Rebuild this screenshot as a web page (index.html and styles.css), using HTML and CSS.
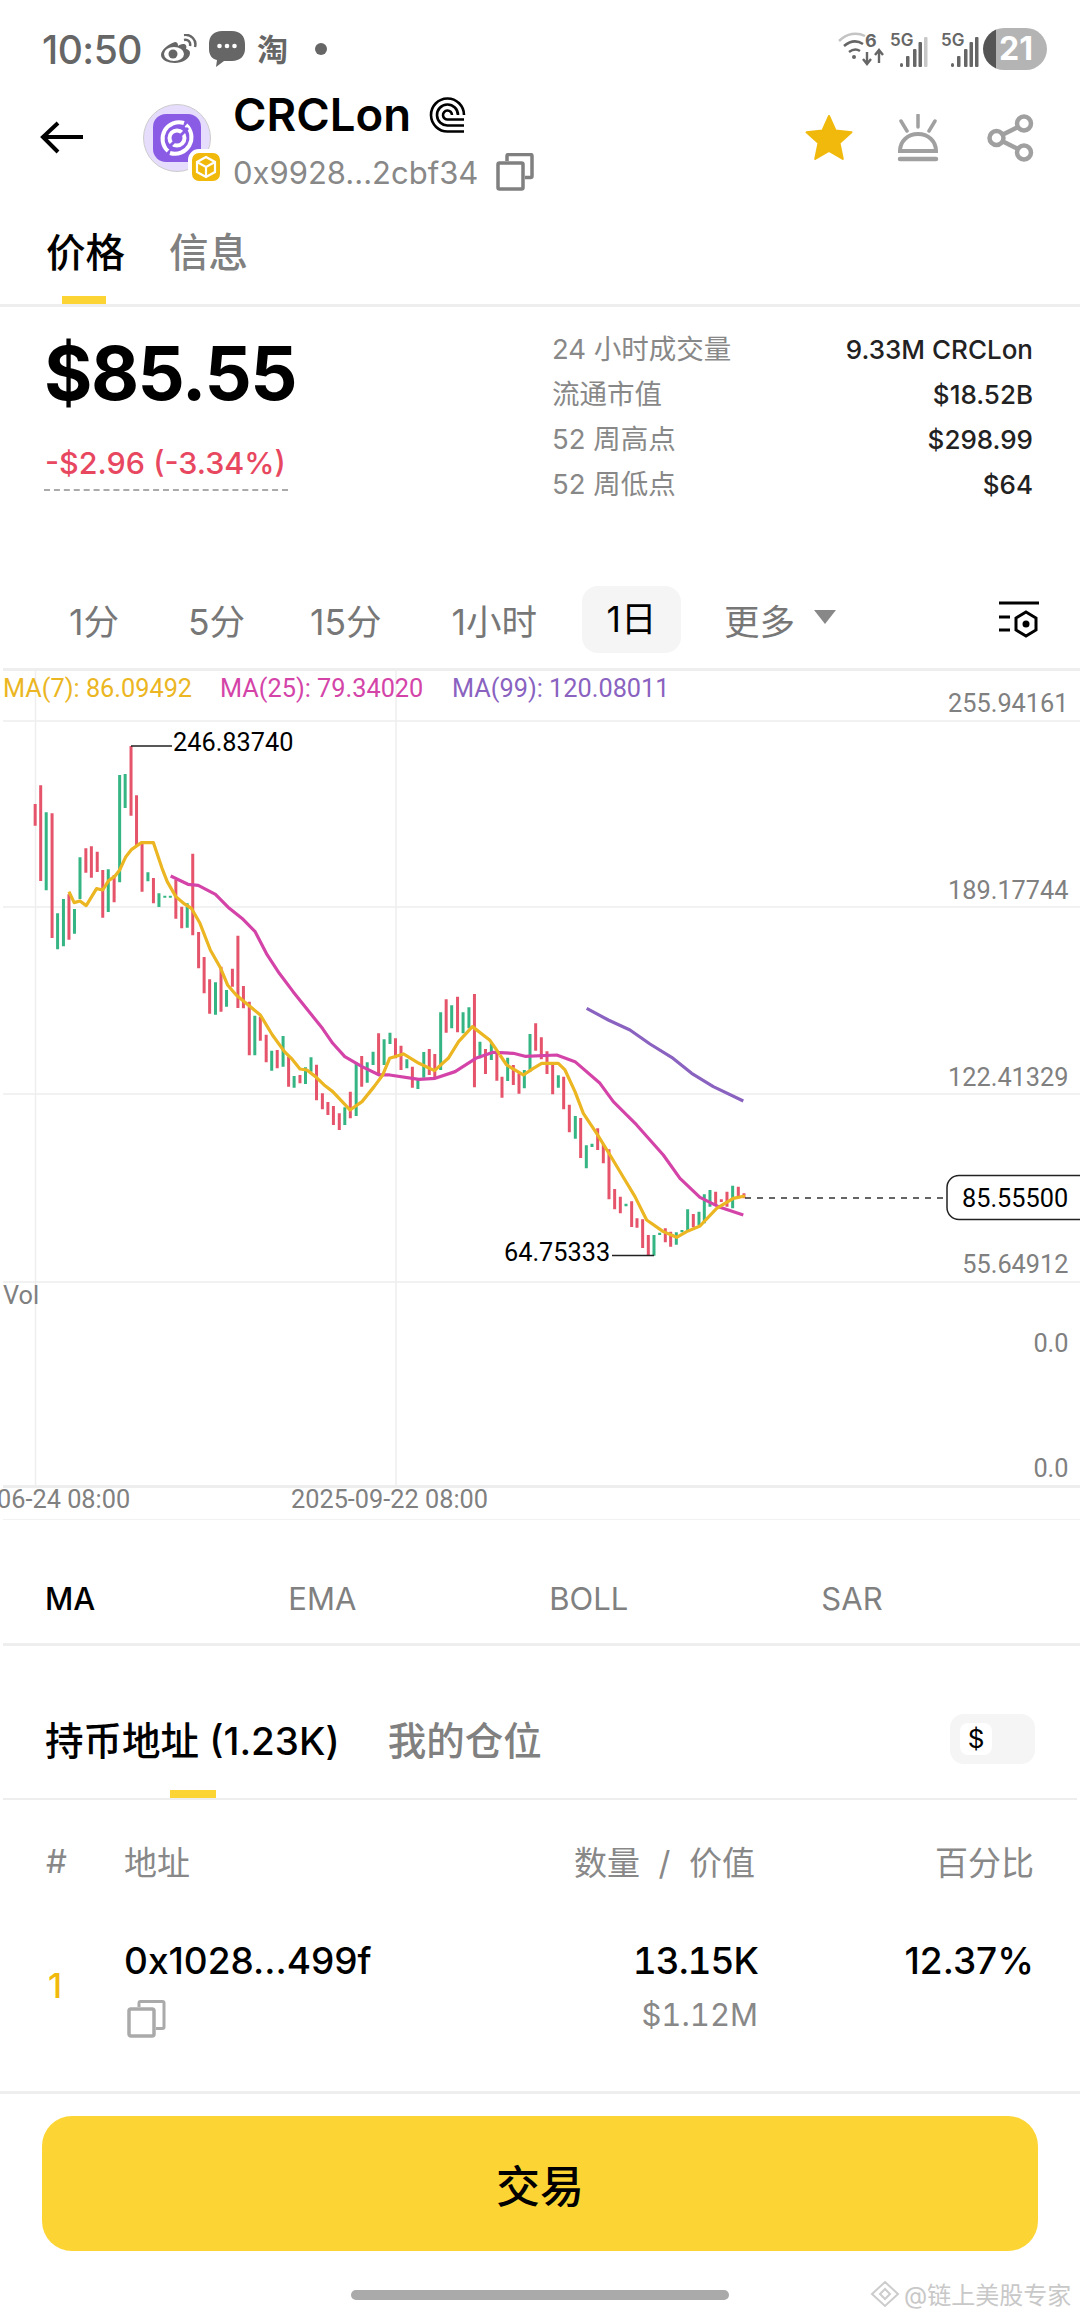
FILE: index.html
```html
<!DOCTYPE html>
<html lang="zh-CN">
<head>
    <meta charset="UTF-8">
    <meta name="viewport" content="width=device-width, initial-scale=1.0">
    <title>CRCLon</title>
    <link rel="stylesheet" href="styles.css">
</head>
<body>
<div class="page">
    <div class="status-bar">
        <span class="status-time">10:50</span>
        <svg class="ic-weibo" width="38" height="30" viewBox="0 0 38 30">
            <path d="M15 8C8 10 1 16 1 21c0 5 7 8 14 8s15-4 15-10c0-3-3-4-4-4 1-3 0-5-3-5-2 0-4 1-5 2 0-3-1-4-3-4z" fill="#666"/>
            <ellipse cx="14" cy="20" rx="10" ry="7" fill="#fff"/>
            <circle cx="13" cy="20" r="4.5" fill="#666"/>
            <path d="M24 6c4-1 7 2 6 6M24 1c7-1 13 5 11 12" fill="none" stroke="#666" stroke-width="2.5"/>
        </svg>
        <svg class="ic-chat" width="36" height="36" viewBox="0 0 36 36">
            <path d="M13 0h10c8 0 13 5 13 13v5c0 7-5 12-13 12H15l-8 6 1-7C3 28 0 24 0 18v-5C0 5 5 0 13 0z" fill="#666"/>
            <circle cx="10.500" cy="15" r="2.300" fill="#fff"/>
            <circle cx="18" cy="15" r="2.300" fill="#fff"/>
            <circle cx="25.500" cy="15" r="2.300" fill="#fff"/>
        </svg>
        <span class="status-tao">淘</span>
        <span class="status-dot"></span>
        <div class="status-right">
            <svg class="ic-wifi" width="46" height="36" viewBox="0 0 46 36">
                <path d="M1 10C9 2 19 1 27 5" fill="none" stroke="#c4c4c4" stroke-width="2.500"/>
                <path d="M6 15c6-5 13-6 19-2M11 21c4-3 8-3 11-1" fill="none" stroke="#666" stroke-width="2.500"/>
                <circle cx="16" cy="26" r="2" fill="#666"/>
                <text class="status-six" x="27" y="16">6</text>
                <path d="M29 21v12M25 28l4 5 4-5M41 32V19M37 24l4-5 4 5" fill="none" stroke="#666" stroke-width="2.400"/>
            </svg>
            <svg class="ic-signal" width="38" height="46" viewBox="0 -6 38 46">
                <text class="status-5g" x="0" y="14">5G</text>
                <rect x="10" y="31" width="3" height="4" rx="1.500" fill="#666"/>
                <rect x="16" y="24" width="3.500" height="11" rx="1" fill="#666"/>
                <rect x="23" y="17" width="3.500" height="18" rx="1" fill="#666"/>
                <rect x="34" y="5" width="3.500" height="30" rx="1" fill="#c8c8c8"/>
                <rect x="28.500" y="10" width="3.500" height="25" rx="1" fill="#666"/>
            </svg>
            <svg class="ic-signal-2" width="38" height="46" viewBox="0 -6 38 46">
                <text class="status-5g" x="0" y="14">5G</text>
                <rect x="10" y="31" width="3" height="4" rx="1.500" fill="#666"/>
                <rect x="16" y="24" width="3.500" height="11" rx="1" fill="#666"/>
                <rect x="23" y="17" width="3.500" height="18" rx="1" fill="#666"/>
                <rect x="28.500" y="10" width="3.500" height="25" rx="1" fill="#666"/>
                <rect x="34" y="5" width="3.500" height="30" rx="1" fill="#666"/>
            </svg>
            <div class="battery">21</div>
        </div>
    </div>

    <div class="top-nav">
        <svg class="ic-back" width="44" height="34" viewBox="0 0 44 34">
            <path d="M43 16H3M18 2L3 16l15 15" fill="none" stroke="#000" stroke-width="4"/>
        </svg>
        <div class="token-logo">
            <svg width="80" height="80" viewBox="0 0 80 80">
                <circle cx="34" cy="34" r="33.500" fill="#e6dcfb" stroke="#ccc" stroke-width="1"/>
                <rect x="10" y="10" width="48" height="48" rx="13" fill="#8a5ce6"/>
                <path d="M25 47A16.500 16.500 0 0 1 41 19M43 21A16.500 16.500 0 0 1 27 49" fill="none" stroke="#fff" stroke-width="4"/>
                <circle cx="34" cy="34" r="7.500" fill="none" stroke="#fff" stroke-width="4"/>
                <path d="M25 44L45 24" stroke="#8a5ce6" stroke-width="3"/>
                <rect x="47" y="47" width="32" height="32" rx="9" fill="#f0b90b" stroke="#fff" stroke-width="4"/>
                <path d="M63 53l9 5v10l-9 5-9-5V58zM54 58l9 5 9-5M63 63v10" fill="none" stroke="#fff" stroke-width="2.200"/>
            </svg>
        </div>
        <div class="token-info">
            <div class="token-title">
                <span>CRCLon</span>
                <svg width="38" height="38" viewBox="0 0 38 38">
                    <path d="M35 19A16.500 16.500 0 1 0 19 35.500H35M29 19A10.500 10.500 0 1 0 19 29.500H35M23 19A4.500 4.500 0 1 0 19 23.500H35" fill="none" stroke="#000" stroke-width="2.600"/>
                </svg>
            </div>
            <div class="token-address">
                <span>0x9928...2cbf34</span>
                <svg width="38" height="38" viewBox="0 0 38 38">
                    <path d="M11 8V3c0-1 .5-1.500 1.500-1.500h22c1 0 1.500 .5 1.500 1.500v20c0 1-.5 1.500-1.500 1.500H29" fill="none" stroke="#808080" stroke-width="3.500"/>
                    <rect x="2" y="10" width="25" height="26" rx="1.500" fill="none" stroke="#808080" stroke-width="3.500"/>
                </svg>
            </div>
        </div>
        <div class="nav-actions">
            <svg width="50" height="48" viewBox="0 0 50 48">
                <path d="M25 2l6.500 14.500 16 1.800-12 10.700 3.300 16-13.800-8-13.800 8 3.300-16-12-10.700 16-1.800z" fill="#f0b90b" stroke="#f0b90b" stroke-width="2" stroke-linejoin="round"/>
            </svg>
            <svg width="42" height="48" viewBox="0 0 42 48">
                <path d="M21 1v12M4 7l6 10M38 7l-6 10" fill="none" stroke="#a0a0a0" stroke-width="3.500" stroke-linecap="round"/>
                <path d="M3 37c0-10 8-17 18-17s18 7 18 17z" fill="none" stroke="#a0a0a0" stroke-width="4"/>
                <path d="M3 45h36" stroke="#a0a0a0" stroke-width="4.500" stroke-linecap="round"/>
            </svg>
            <svg class="ic-share" width="48" height="48" viewBox="0 0 48 48">
                <circle cx="37" cy="9.500" r="7" fill="none" stroke="#a0a0a0" stroke-width="4.500"/>
                <circle cx="37" cy="38.500" r="7" fill="none" stroke="#a0a0a0" stroke-width="4.500"/>
                <circle cx="9.500" cy="24" r="7" fill="none" stroke="#a0a0a0" stroke-width="4.500"/>
                <path d="M16 20.500L31 13M16 27.500L31 35" stroke="#a0a0a0" stroke-width="4.500"/>
            </svg>
        </div>
    </div>

    <div class="main-tabs">
        <span class="tab tab-active">价格</span>
        <span class="tab">信息</span>
    </div>

    <div class="summary">
        <div class="summary-price">
            <div class="price">$85.55</div>
            <div class="price-change">-$2.96 (-3.34%)</div>
        </div>
        <div class="summary-stats">
            <div class="stat-row"><span class="stat-label">24 小时成交量</span><span class="stat-value">9.33M CRCLon</span></div>
            <div class="stat-row"><span class="stat-label">流通市值</span><span class="stat-value">$18.52B</span></div>
            <div class="stat-row"><span class="stat-label">52 周高点</span><span class="stat-value">$298.99</span></div>
            <div class="stat-row"><span class="stat-label">52 周低点</span><span class="stat-value">$64</span></div>
        </div>
    </div>

    <div class="intervals">
        <span class="interval w-1m">1分</span>
        <span class="interval w-5m">5分</span>
        <span class="interval w-15m">15分</span>
        <span class="interval w-1h">1小时</span>
        <span class="interval interval-active">1日</span>
        <span class="interval interval-more">更多<i class="caret"></i></span>
        <svg class="ic-settings" width="42" height="38" viewBox="0 0 42 38">
            <path d="M1 2h40M1 16h11M1 29h11" fill="none" stroke="#000" stroke-width="3"/>
            <path d="M28 11l10 6v12l-10 6-10-6V17z" fill="none" stroke="#000" stroke-width="3"/>
            <circle cx="28" cy="23" r="3.500" fill="#000"/>
        </svg>
    </div>

    <svg class="chart" width="1080" height="852" viewBox="0 668 1080 852">
        <!-- grid -->
        <path class="grid" d="M3 721H1080M3 907H1080M3 1094H1080M3 1282H1080M35.500 671V1485M396 671V1485"/>
        <path class="grid-bold" d="M3 669.500H1080M3 1486.500H1080"/>
        <path class="grid" d="M3 1520H1080"/>

        <g transform="translate(0 700) scale(.3448 .3333)">
            <path class="candle-red" d="M102 312V377M118 256V543M151 340V714M200 583V719M249 445V518M265 439V533M282 455V516M298 510V653M331 525V607M380 138V347M396 286V438M412 430V575M445 534V610M510 540V656M527 620V685M559 461V706M576 696V805M592 771V880M608 838V941M641 800V935M674 806V860M690 707V924M706 858V925M723 905V1066M755 950V1022M772 1004V1087M804 1050V1105M837 1070V1160M870 1125V1150M918 1094V1201M935 1180V1228M951 1206V1245M967 1218V1275M984 1240V1290M1016 1175V1255M1049 1068V1160M1098 1000V1125M1147 1015V1075M1163 1037V1110M1196 1100V1163M1245 1047V1125M1261 1062V1135M1294 898V998M1327 890V997M1376 882V1162M1408 1047V1122M1441 1062V1142"/>
            <path class="candle-green" d="M134 337V571M167 640V748M184 597V739M216 627V701M232 472V597M314 508V636M347 225V547M363 222V324M429 517V544M461 580V621M478 587V593M494 587V593M543 610V683M625 847V944M657 870V920M739 947V1066M788 1052V1112M821 1008V1100M853 1128V1163M886 1102V1152M902 1072V1115M1000 1222V1275M1033 1088V1248M1065 1087V1148M1082 1055V1095M1114 1018V1095M1131 998V1032M1180 1078V1105M1212 1140V1167M1229 1056V1133M1278 937V1110M1310 916V985M1343 937V1000M1360 922V985M1392 1025V1075M1425 1030V1080"/>
            <polyline class="ma-pink" points="495,528 545,553 575,556 625,583 665,625 705,658 740,695 775,765 810,820 850,875 900,940 935,985 965,1030 1000,1070 1050,1100 1100,1125 1130,1125 1215,1138 1262,1135 1320,1115 1380,1075 1430,1057 1450,1058"/>
            <polyline class="ma-yellow" points="200,575 215,608 232,603 250,617 280,566 298,570 315,542 332,530 347,510 365,470 382,448 410,428 445,428 470,505 485,545 510,590 535,612 555,625 580,670 610,750 640,805 660,855 685,885 720,915 755,945 790,1005 825,1055 845,1075 870,1107 890,1110 915,1130 940,1155 965,1175 1015,1230 1050,1205 1085,1160 1110,1125 1130,1075 1170,1062 1215,1090 1260,1112 1300,1075 1330,1025 1370,980 1420,1020 1450,1065"/>
        </g>
        <g transform="translate(500 970) scale(.3333)">
            <path class="candle-red" d="M6 320V383M40 285V345M57 310V371M107 160V242M124 202V268M141 244V312M158 285V373M191 320V418M208 404V487M242 444V564M293 475V540M310 523V580M327 538V688M344 657V718M361 680V730M395 694V771M411 745V773M428 748V834M445 795V857M496 775V817M512 785V830M580 732V772M647 665V705M664 688V696M681 665V710M715 650V685M732 670V685"/>
            <path class="candle-green" d="M23 263V333M73 300V355M90 192V305M175 316V353M226 438V506M259 526V595M276 521V531M378 701V709M462 795V857M479 788V795M529 787V824M546 780V787M563 718V782M597 725V765M613 673V760M630 660V710M698 647V715"/>
            <polyline class="ma-purple" points="260,115 325,150 390,180 450,222 515,262 575,310 640,350 730,393"/>
            <polyline class="ma-pink" points="0,248 40,250 75,259 170,255 225,275 300,340 340,395 410,465 490,555 540,625 600,682 660,712 730,735"/>
            <polyline class="ma-yellow" points="0,255 20,285 70,315 100,295 125,280 175,280 195,300 225,365 250,430 290,490 330,555 375,630 405,680 440,750 490,785 530,802 560,785 600,768 650,715 700,685 735,678"/>
        </g>

        <!-- high / low markers -->
        <path class="marker" d="M131 746H172M612 1255.500H654"/>
        <text class="axis-dark" x="173" y="751">246.83740</text>
        <text class="axis-dark" x="504" y="1261">64.75333</text>

        <!-- legend -->
        <text class="legend legend-yellow" x="3" y="697">MA(7): 86.09492</text>
        <text class="legend legend-pink" x="220" y="697">MA(25): 79.34020</text>
        <text class="legend legend-purple" x="452" y="697">MA(99): 120.08011</text>

        <!-- axis -->
        <text class="axis end" x="1068.500" y="712">255.94161</text>
        <text class="axis end" x="1068.500" y="899">189.17744</text>
        <text class="axis end" x="1068.500" y="1086">122.41329</text>
        <text class="axis end" x="1068.500" y="1273">55.64912</text>
        <text class="axis end" x="1068.500" y="1352">0.0</text>
        <text class="axis end" x="1068.500" y="1477">0.0</text>
        <text class="axis" x="3" y="1304">Vol</text>
        <text class="axis" x="-3" y="1508">06-24 08:00</text>
        <text class="axis" x="291" y="1508">2025-09-22 08:00</text>

        <!-- last price -->
        <path class="last-line" d="M745 1198H943"/>
        <rect class="last-box" x="947" y="1175.500" width="150" height="44" rx="12"/>
        <text class="axis-dark" x="962" y="1207">85.55500</text>
    </svg>

    <div class="indicators">
        <span class="indicator indicator-active">MA</span>
        <span class="indicator">EMA</span>
        <span class="indicator">BOLL</span>
        <span class="indicator">SAR</span>
    </div>

    <div class="holder-tabs">
        <span class="holder-tab holder-tab-active">持币地址 (1.23K)</span>
        <span class="holder-tab">我的仓位</span>
        <div class="unit-toggle"><span>$</span></div>
    </div>

    <div class="holders">
        <div class="holders-head">
            <span class="col-rank">#</span>
            <span class="col-addr">地址</span>
            <span class="col-qty head-qty">数量 &nbsp;/&nbsp; 价值</span>
            <span class="col-pct">百分比</span>
        </div>
        <div class="holders-row">
            <span class="col-rank rank-num">1</span>
            <div class="col-addr">
                <div class="holder-addr">0x1028...499f</div>
                <svg class="ic-copy" width="40" height="38" viewBox="0 0 40 38">
                    <path d="M12 7V3c0-1 .5-1.500 1.500-1.500h22c1 0 1.500 .5 1.500 1.500v24c0 1-.5 1.500-1.500 1.500H29" fill="none" stroke="#aaa" stroke-width="3"/>
                    <rect x="2" y="9" width="25" height="27" rx="2" fill="none" stroke="#aaa" stroke-width="3.500"/>
                </svg>
            </div>
            <div class="col-qty">
                <div class="holder-qty">13.15K</div>
                <div class="holder-val">$1.12M</div>
            </div>
            <div class="col-pct holder-pct">12.37%</div>
        </div>
    </div>

    <div class="trade-bar">
        <button class="trade-btn">交易</button>
        <div class="home-bar"></div>
    </div>

    <div class="watermark">
        <svg width="30" height="28" viewBox="0 0 30 28">
            <path d="M15 2L28 14 15 26 2 14z" fill="none" stroke="#ccc" stroke-width="2"/>
            <path d="M15 9l5 5-5 5-5-5z" fill="none" stroke="#ccc" stroke-width="2"/>
        </svg>
        <span>@链上美股专家</span>
    </div>
</div>
</body>
</html>
```

FILE: styles.css
```css
* {
    box-sizing: border-box;
}
body {
    margin: 0;
    background: #fff;
    font-family: Inter, "Noto Sans CJK SC", sans-serif;
    color: #000;
}
.page {
    position: relative;
    width: 1080px;
    height: 2316px;
    overflow: hidden;
    background: #fff;
}

/* status bar */
.status-bar {
    display: flex;
    align-items: center;
    height: 98px;
    padding: 0 33px 0 42px;
    color: #666;
}
.status-time {
    width: 100px;
    font-size: 39px;
    font-weight: 500;
    letter-spacing: -.5px;
}
.ic-weibo {
    margin-left: 18px;
}
.ic-chat {
    margin-left: 11px;
}
.status-tao {
    margin-left: 12px;
    font-size: 31px;
    font-weight: 700;
    line-height: 1;
}
.status-dot {
    width: 12px;
    height: 12px;
    margin-left: 27px;
    border-radius: 50%;
    background: #666;
}
.status-right {
    display: flex;
    align-items: center;
    margin-left: auto;
}
.ic-signal {
    margin-left: 6px;
}
.ic-signal-2 {
    margin-left: 13px;
}
.status-six {
    font: 700 18px Inter, sans-serif;
    fill: #666;
}
.status-5g {
    font: 600 17px Inter, sans-serif;
    fill: #666;
}
.battery {
    width: 64px;
    height: 42px;
    margin-left: 4px;
    border-radius: 21px;
    background: linear-gradient(to right, #555 13px, #b4b4b4 13px);
    color: #fff;
    font-size: 32px;
    font-weight: 700;
    line-height: 42px;
    padding-left: 16px;
}

/* header */
.top-nav {
    display: flex;
    align-items: flex-start;
    height: 107px;
    padding-left: 40px;
}
.ic-back {
    margin-top: 23px;
}
.token-logo {
    width: 80px;
    height: 80px;
    margin: 6px 0 0 59px;
}
.token-info {
    margin-left: 10px;
    margin-top: -8px;
}
.token-title {
    display: flex;
    align-items: center;
    gap: 18px;
    height: 50px;
    font-size: 45.500px;
    font-weight: 600;
    line-height: 50px;
}
.token-address {
    display: flex;
    align-items: center;
    gap: 18px;
    height: 50px;
    margin-top: 7px;
    color: #888;
    font-size: 31px;
}
.nav-actions {
    position: absolute;
    top: 114px;
    right: 45px;
    display: flex;
    align-items: center;
    gap: 43px;
}
.ic-share {
    margin-left: 5px;
}

/* price / info tabs */
.main-tabs {
    display: flex;
    gap: 44px;
    height: 102px;
    padding: 22px 0 0 46px;
    border-bottom: 3px solid #eee;
}
.tab {
    position: relative;
    height: 76px;
    color: #808080;
    font-size: 39.500px;
    font-weight: 500;
    line-height: 52px;
}
.tab-active {
    color: #000;
}
.tab-active::after {
    content: "";
    position: absolute;
    left: 16px;
    bottom: -1px;
    width: 44px;
    height: 8px;
    background: #fcd535;
}

/* summary */
.summary {
    display: flex;
    justify-content: space-between;
    height: 279px;
    padding: 21px 47px 0 44px;
}
.price {
    font-size: 74px;
    font-weight: 700;
    line-height: 90px;
    letter-spacing: -1.500px;
}
.price-change {
    width: 244px;
    margin-top: 27px;
    padding: 0 0 8px 1px;
    border-bottom: 2px dashed #aaa;
    color: #e8485f;
    font-size: 30.500px;
    font-weight: 500;
    line-height: 36px;
    white-space: nowrap;
}
.summary-stats {
    width: 481px;
    margin-top: -1px;
}
.stat-row {
    display: flex;
    justify-content: space-between;
    height: 45px;
    line-height: 45px;
}
.stat-label {
    color: #888;
    font-size: 27.500px;
}
.stat-value {
    color: #222;
    font-size: 26px;
    font-weight: 500;
}

/* interval row */
.intervals {
    display: flex;
    align-items: center;
    height: 67px;
    color: #777;
    font-size: 35.500px;
}
.interval {
    text-align: center;
}
.w-1m {
    margin-left: 69px;
}
.w-5m {
    margin-left: 69px;
}
.w-15m {
    margin-left: 65px;
}
.w-1h {
    margin-left: 70px;
}
.interval-active {
    width: 99px;
    height: 67px;
    margin-left: 45px;
    border-radius: 16px;
    background: #f5f5f5;
    color: #000;
    line-height: 67px;
}
.interval-more {
    display: flex;
    align-items: center;
    margin-left: 43px;
}
.caret {
    width: 0;
    height: 0;
    margin-left: 19px;
    margin-top: -6px;
    border-left: 11px solid transparent;
    border-right: 11px solid transparent;
    border-top: 14px solid #888;
}
.ic-settings {
    margin-left: auto;
    margin-right: 40px;
}

/* chart */
.chart {
    display: block;
    margin-top: 15px;
    font-family: Roboto, sans-serif;
}
.grid {
    fill: none;
    stroke: #eee;
    stroke-width: 1.500;
}
.grid-bold {
    fill: none;
    stroke: #eee;
    stroke-width: 3;
}
.candle-red,
.candle-green,
.ma-yellow,
.ma-pink,
.ma-purple {
    fill: none;
    vector-effect: non-scaling-stroke;
    stroke-linejoin: round;
}
.candle-red {
    stroke: #e5546a;
    stroke-width: 3;
}
.candle-green {
    stroke: #35b584;
    stroke-width: 3;
}
.ma-yellow {
    stroke: #ebb622;
    stroke-width: 3.200;
}
.ma-pink {
    stroke: #d444a8;
    stroke-width: 3.200;
}
.ma-purple {
    stroke: #8a62c0;
    stroke-width: 3.200;
}
.marker {
    fill: none;
    stroke: #222;
    stroke-width: 1.500;
}
.last-line {
    fill: none;
    stroke: #333;
    stroke-width: 1.500;
    stroke-dasharray: 6 6;
}
.last-box {
    fill: #fff;
    stroke: #222;
    stroke-width: 1.500;
}
.legend {
    font-size: 25.300px;
}
.legend-yellow {
    fill: #ebb622;
}
.legend-pink {
    fill: #d444a8;
}
.legend-purple {
    fill: #8a62c0;
}
.axis {
    fill: #808080;
    font-size: 25.300px;
}
.axis.end {
    text-anchor: end;
}
.axis-dark {
    fill: #000;
    font-size: 25.300px;
}

/* indicator tabs */
.indicators {
    display: flex;
    align-items: center;
    gap: 193px;
    height: 126px;
    margin-left: 3px;
    padding: 34px 0 0 42px;
    border-bottom: 3px solid #eee;
    color: #808080;
    font-size: 31px;
}
.indicator-active {
    color: #000;
    font-weight: 500;
}

/* holders */
.holder-tabs {
    display: flex;
    align-items: flex-start;
    gap: 48px;
    height: 154px;
    margin: 0 3px;
    padding: 68px 0 0 42px;
    border-bottom: 2px solid #eee;
}
.holder-tab {
    position: relative;
    height: 84px;
    color: #808080;
    font-size: 38.500px;
    font-weight: 500;
    line-height: 54px;
    white-space: nowrap;
}
.holder-tab-active {
    color: #000;
}
.holder-tab-active::after {
    content: "";
    position: absolute;
    left: 125px;
    bottom: 0;
    width: 46px;
    height: 8px;
    background: #fcd535;
}
.unit-toggle {
    width: 85px;
    height: 50px;
    margin: 0 42px 0 auto;
    padding: 9px 0 0 10px;
    border-radius: 14px;
    background: #f5f5f5;
}
.unit-toggle span {
    display: block;
    width: 32px;
    height: 32px;
    border-radius: 8px;
    background: #fff;
    font-size: 26px;
    line-height: 32px;
    text-align: center;
}
.holders {
    height: 294px;
    border-bottom: 3px solid #eee;
}
.holders-head,
.holders-row {
    display: grid;
    grid-template-columns: 78px 1fr 260px 276px;
    padding: 0 46px 0 46px;
}
.holders-head {
    align-items: center;
    height: 122px;
    color: #888;
    font-size: 33px;
}
.col-qty,
.col-pct {
    text-align: right;
}
.head-qty {
    margin-right: 3px;
}
.holders-row {
    padding-top: 19px;
}
.rank-num {
    margin-top: 25px;
    padding-left: 2px;
    color: #f0b90b;
    font-size: 34px;
    font-weight: 500;
    line-height: 40px;
}
.holder-addr,
.holder-qty,
.holder-pct {
    font-size: 37px;
    font-weight: 500;
    line-height: 40px;
    white-space: nowrap;
}
.holder-qty,
.holder-val {
    font-variant-numeric: tabular-nums;
}
.holder-qty {
    letter-spacing: -1px;
}
.ic-copy {
    display: block;
    margin: 19px 0 0 3px;
}
.holder-val {
    margin-top: 16px;
    color: #888;
    font-size: 31px;
    line-height: 36px;
}

/* bottom button */
.trade-bar {
    padding: 22px 42px 0;
}
.trade-btn {
    display: block;
    width: 996px;
    height: 135px;
    border: none;
    border-radius: 30px;
    background: #fcd535;
    color: #000;
    font-family: Inter, "Noto Sans CJK SC", sans-serif;
    font-size: 44px;
    font-weight: 500;
}
.home-bar {
    width: 378px;
    height: 10px;
    margin: 39px auto 0;
    border-radius: 5px;
    background: #aaa;
}
.watermark {
    position: absolute;
    left: 870px;
    top: 2276px;
    display: flex;
    align-items: center;
    gap: 4px;
    color: #c8c8c8;
    font-size: 24px;
    white-space: nowrap;
}
```
